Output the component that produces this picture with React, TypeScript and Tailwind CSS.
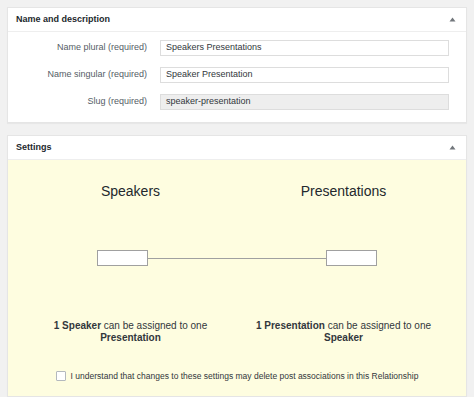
const font = { fontFamily: '"Liberation Sans", Arial, sans-serif' };

function Toggle() {
  return (
    <svg width="7" height="5" viewBox="0 0 7 5" className="text-[#72777c]">
      <path d="M3.5 0.5 L6.5 4.5 L0.5 4.5 Z" fill="currentColor" />
    </svg>
  );
}

function Panel({ title, children }: { title: string; children: React.ReactNode }) {
  return (
    <section className="border border-[#e5e5e5] bg-white shadow-[0_1px_1px_rgba(0,0,0,0.04)]">
      <div className="flex h-[24px] items-center justify-between border-b border-[#eeeeee] pl-2 pr-[10px]">
        <h2 className="text-[9px] font-bold text-[#23282d]">{title}</h2>
        <Toggle />
      </div>
      {children}
    </section>
  );
}

const fields = [
  { label: "Name plural", value: "Speakers Presentations", readOnly: false },
  { label: "Name singular", value: "Speaker Presentation", readOnly: false },
  { label: "Slug", value: "speaker-presentation", readOnly: true },
];

function FieldRow({ label, value, readOnly }: { label: string; value: string; readOnly: boolean }) {
  return (
    <div className="flex items-center">
      <label className="w-[139px] text-right text-[9px] text-[#555d66]">
        {label} (required)
      </label>
      <div
        className={`ml-[13px] flex h-[16px] w-[289px] items-center border border-[#dddddd] px-[5px] text-[9px] text-[#32373c] ${
          readOnly ? "bg-[#eeeeee]" : "bg-white"
        }`}
      >
        {value}
      </div>
    </div>
  );
}

export default function App() {
  return (
    <div className="min-h-[397px] bg-[#f1f1f1] px-[7px] pt-[7px]" style={font}>
      <Panel title="Name and description">
        <div className="flex flex-col gap-[11px] pb-[12px] pt-[8px]">
          {fields.map((f) => (
            <FieldRow key={f.label} {...f} />
          ))}
        </div>
      </Panel>

      <div className="mt-[12px]">
        <Panel title="Settings">
          <div className="bg-[#fefde0] px-4 pb-[14px] pt-[23px] text-[#23282d]">
            <div className="grid grid-cols-2 text-center text-[14px] leading-[17px]">
              <div>Speakers</div>
              <div>Presentations</div>
            </div>

            <div className="mt-[50px] flex items-center justify-center">
              <div className="h-[16px] w-[51px] border border-[#a0a0a0] bg-white" />
              <div className="h-px w-[178px] bg-[#a0a0a0]" />
              <div className="h-[16px] w-[51px] border border-[#a0a0a0] bg-white" />
            </div>

            <div className="mt-[54px] grid grid-cols-2 text-center text-[10px] leading-[12px] text-[#32373c]">
              <p>
                <strong>1 Speaker</strong> can be assigned to one
                <br />
                <strong>Presentation</strong>
              </p>
              <p>
                <strong>1 Presentation</strong> can be assigned to one
                <br />
                <strong>Speaker</strong>
              </p>
            </div>

            <label className="mt-[26px] flex items-center justify-center gap-[5px] text-[8.5px] leading-[12px] text-[#32373c]">
              <span className="h-[10px] w-[10px] rounded-[1px] border border-[#b4b9be] bg-white" />
              I understand that changes to these settings may delete post associations in this Relationship
            </label>
          </div>
        </Panel>
      </div>
    </div>
  );
}
